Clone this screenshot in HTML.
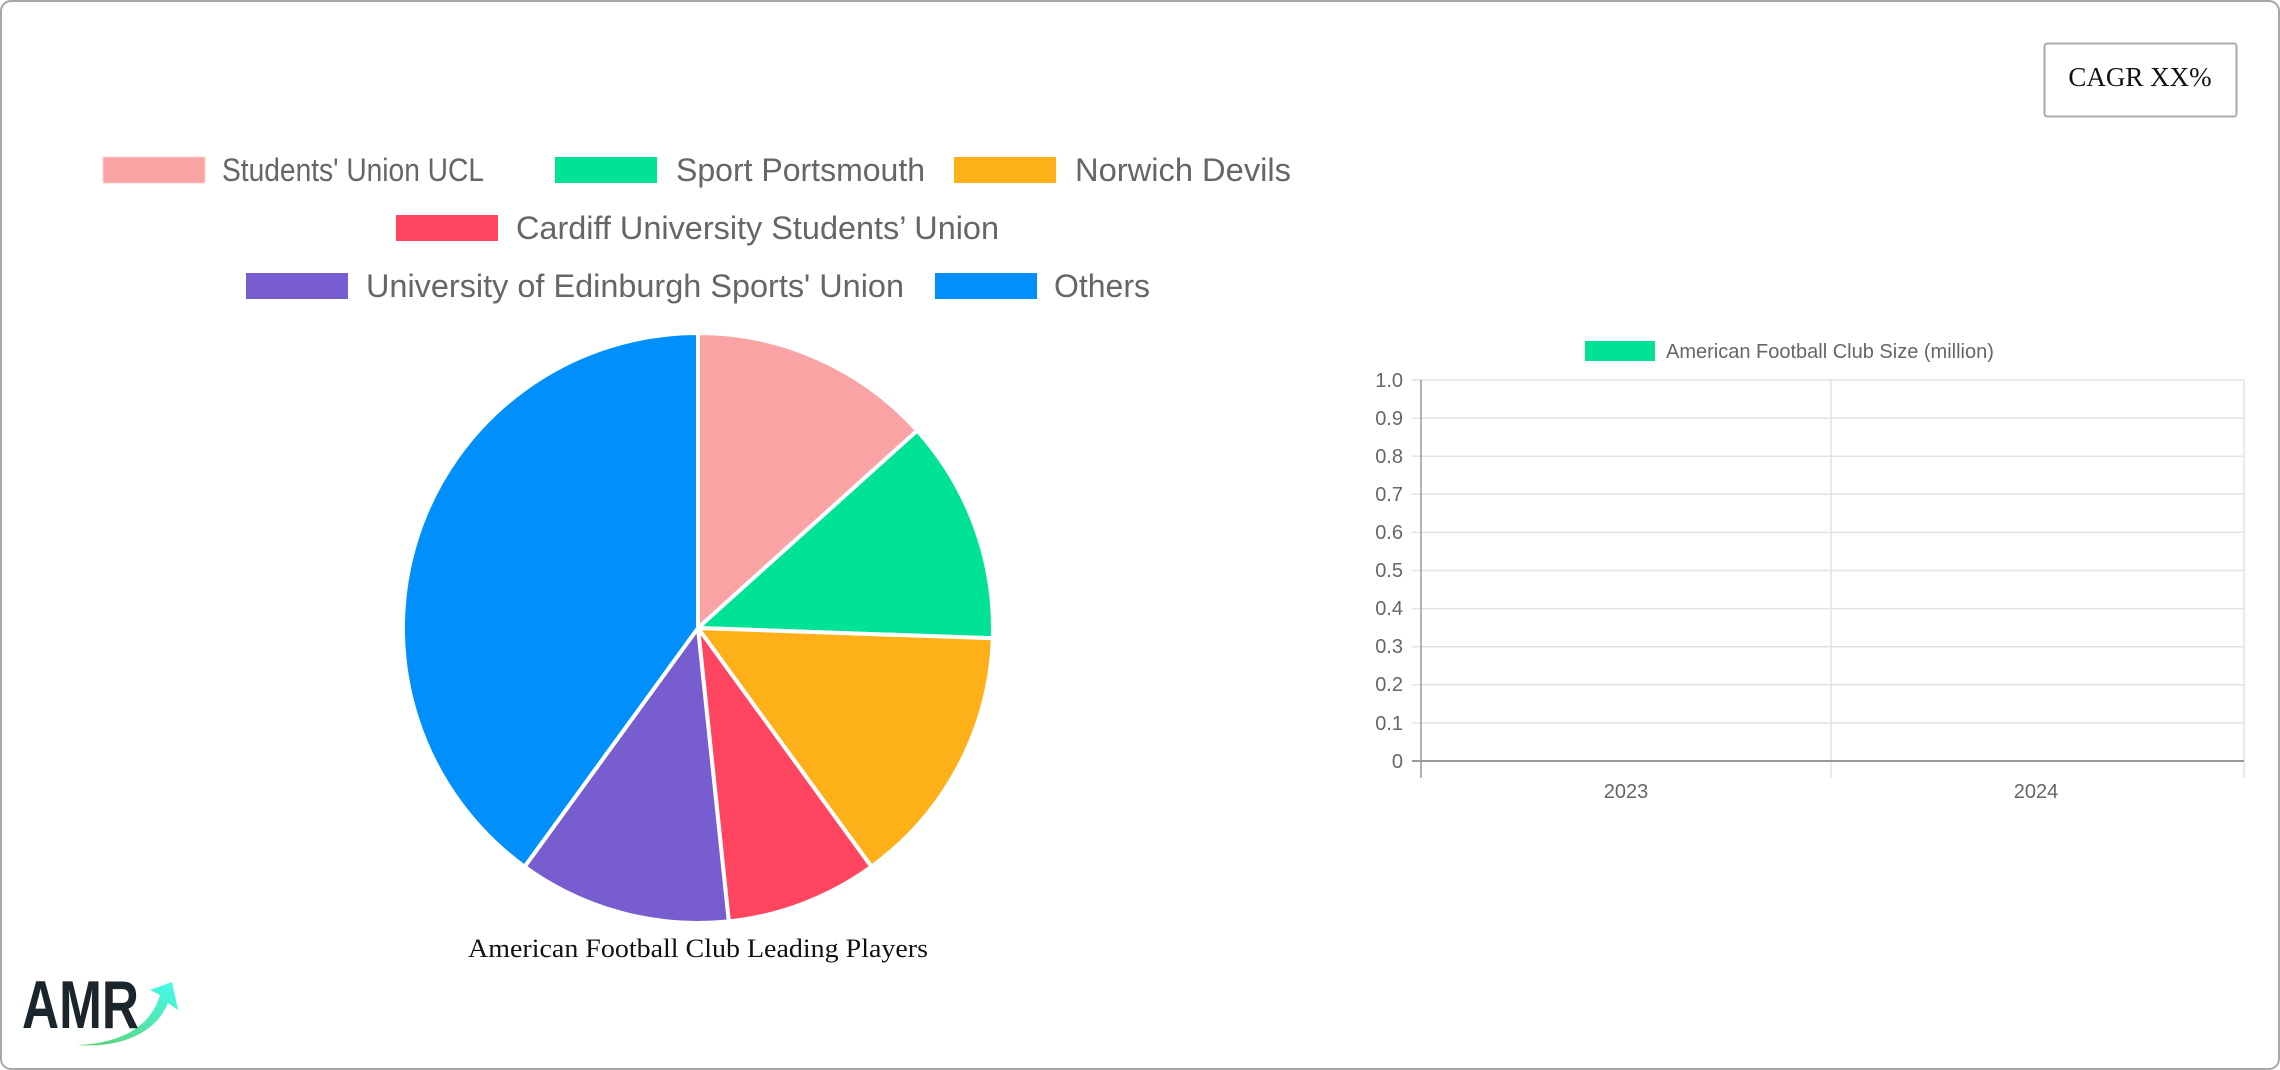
<!DOCTYPE html>
<html><head><meta charset="utf-8"><style>
html,body{margin:0;padding:0;background:#fff;width:2280px;height:1070px;overflow:hidden}
svg{display:block}
</style></head><body>
<svg width="2280" height="1070" viewBox="0 0 2280 1070" xmlns="http://www.w3.org/2000/svg">
<defs>
<linearGradient id="ag" x1="0" y1="1" x2="1" y2="0">
<stop offset="0" stop-color="#5fcf6a"/><stop offset="1" stop-color="#45fbef"/>
</linearGradient>
</defs>
<rect x="1" y="1" width="2278" height="1068" rx="10" fill="#fff" stroke="#a8a8a8" stroke-width="2"/>
<rect x="2044.5" y="43.5" width="192" height="73" rx="3" fill="#fff" stroke="#a8a8a8" stroke-width="2"/>
<text x="2140" y="86" text-anchor="middle" font-family="Liberation Serif, serif" font-size="27" fill="#111">CAGR XX%</text>
<g font-family="Liberation Sans, sans-serif" font-size="32" fill="#666">
<rect x="103" y="157" width="102" height="26" fill="#f9a3a4" stroke="#fbd0d0"/>
<text x="222" y="181" textLength="262" lengthAdjust="spacingAndGlyphs">Students' Union UCL</text>
<rect x="555" y="157" width="102" height="26" fill="#00e396"/>
<text x="676" y="181" textLength="249" lengthAdjust="spacingAndGlyphs">Sport Portsmouth</text>
<rect x="954" y="157" width="102" height="26" fill="#feb019"/>
<text x="1075" y="181" textLength="216" lengthAdjust="spacingAndGlyphs">Norwich Devils</text>
<rect x="396" y="215" width="102" height="26" fill="#ff4560"/>
<text x="516" y="239" textLength="483" lengthAdjust="spacingAndGlyphs">Cardiff University Students’ Union</text>
<rect x="246" y="273" width="102" height="26" fill="#775dd0"/>
<text x="366" y="297" textLength="538" lengthAdjust="spacingAndGlyphs">University of Edinburgh Sports' Union</text>
<rect x="935" y="273" width="102" height="26" fill="#008ffb"/>
<text x="1054" y="297" textLength="96" lengthAdjust="spacingAndGlyphs">Others</text>
</g>
<g stroke="#fff" stroke-width="4" stroke-linejoin="round">
<path d="M698,628 L698,333 A295,295 0 0 1 917.2,430.6 Z" fill="#f9a3a4"/>
<path d="M698,628 L917.2,430.6 A295,295 0 0 1 992.8,638.3 Z" fill="#00e396"/>
<path d="M698,628 L992.8,638.3 A295,295 0 0 1 871.4,866.7 Z" fill="#feb019"/>
<path d="M698,628 L871.4,866.7 A295,295 0 0 1 728.8,921.4 Z" fill="#ff4560"/>
<path d="M698,628 L728.8,921.4 A295,295 0 0 1 524.6,866.7 Z" fill="#775dd0"/>
<path d="M698,628 L524.6,866.7 A295,295 0 0 1 698,333 Z" fill="#008ffb"/>
</g>
<text x="698" y="957" text-anchor="middle" font-family="Liberation Serif, serif" font-size="26" fill="#111" textLength="460" lengthAdjust="spacingAndGlyphs">American Football Club Leading Players</text>
<rect x="1585" y="341" width="70" height="20" fill="#00e396"/>
<text x="1666" y="358" font-family="Liberation Sans, sans-serif" font-size="20" fill="#666">American Football Club Size (million)</text>
<g stroke="#e3e3e3" stroke-width="1.5">
<line x1="1412" y1="380" x2="2244" y2="380"/>
<line x1="1412" y1="418.1" x2="2244" y2="418.1"/>
<line x1="1412" y1="456.2" x2="2244" y2="456.2"/>
<line x1="1412" y1="494.3" x2="2244" y2="494.3"/>
<line x1="1412" y1="532.4" x2="2244" y2="532.4"/>
<line x1="1412" y1="570.5" x2="2244" y2="570.5"/>
<line x1="1412" y1="608.6" x2="2244" y2="608.6"/>
<line x1="1412" y1="646.7" x2="2244" y2="646.7"/>
<line x1="1412" y1="684.8" x2="2244" y2="684.8"/>
<line x1="1412" y1="722.9" x2="2244" y2="722.9"/>
<line x1="1831" y1="380" x2="1831" y2="778"/>
<line x1="2244" y1="380" x2="2244" y2="778"/>
</g>
<line x1="1421" y1="380" x2="1421" y2="778" stroke="#999" stroke-width="1.5"/>
<line x1="1412" y1="761" x2="2244" y2="761" stroke="#999" stroke-width="2"/>
<g font-family="Liberation Sans, sans-serif" font-size="20" fill="#666" text-anchor="end">
<text x="1403" y="387">1.0</text>
<text x="1403" y="425">0.9</text>
<text x="1403" y="463">0.8</text>
<text x="1403" y="501">0.7</text>
<text x="1403" y="539">0.6</text>
<text x="1403" y="577">0.5</text>
<text x="1403" y="615">0.4</text>
<text x="1403" y="653">0.3</text>
<text x="1403" y="691">0.2</text>
<text x="1403" y="730">0.1</text>
<text x="1403" y="768">0</text>
</g>
<g font-family="Liberation Sans, sans-serif" font-size="20" fill="#666" text-anchor="middle">
<text x="1626" y="798">2023</text>
<text x="2036" y="798">2024</text>
</g>
<path d="M77,1045 C115,1044 150,1030 160,995 L150,990 L172,982 L178,1010 L168,1003 C155,1035 118,1048 77,1045 Z" fill="url(#ag)"/>
<text x="22" y="1028" font-family="Liberation Sans, sans-serif" font-weight="bold" font-size="68" fill="#1b262c" textLength="117" lengthAdjust="spacingAndGlyphs">AMR</text>
</svg>
</body></html>
